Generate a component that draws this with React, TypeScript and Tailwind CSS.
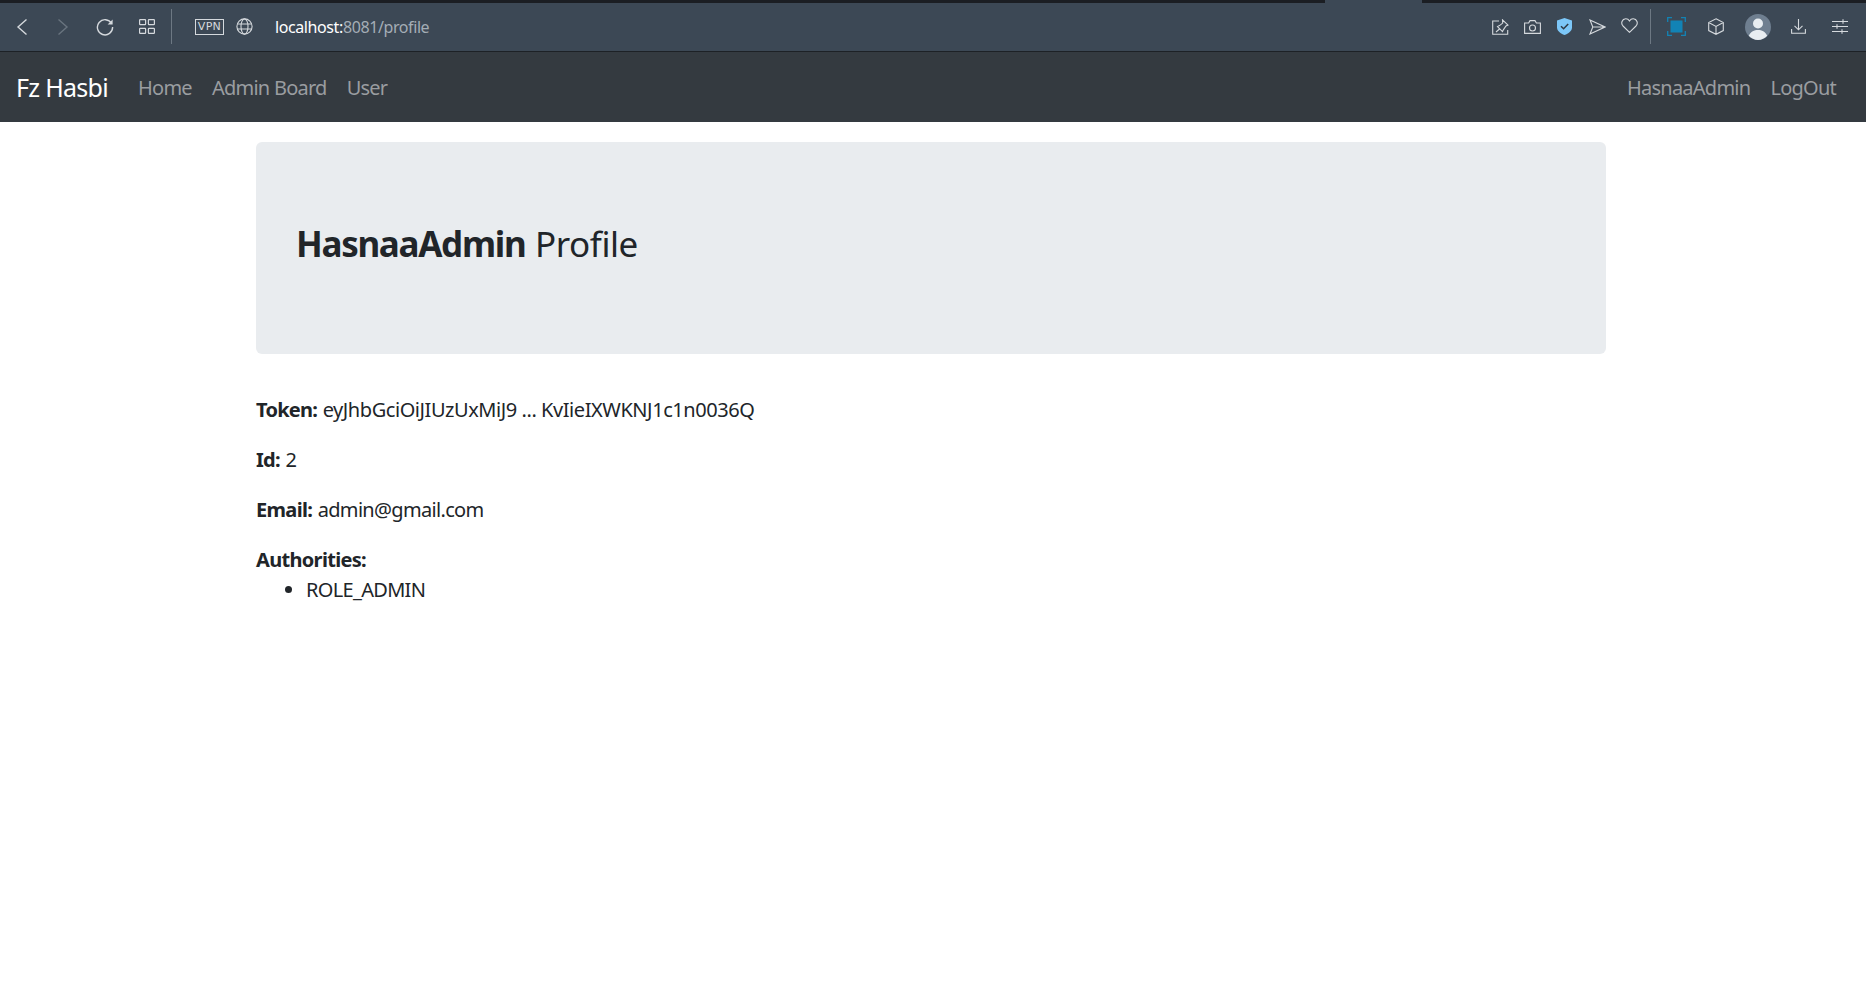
import React from "react";

const S = "fill-none stroke-[#d5d9dd]";

function Toolbar() {
  return (
    <div className="h-[52px] bg-[#3c4855] border-b border-[#1d2126] flex flex-col shrink-0">
      <div className="h-[3px] flex shrink-0">
        <div className="w-[1325px] bg-[#1b1e23]" />
        <div className="w-[97px]" />
        <div className="flex-1 bg-[#1b1e23]" />
      </div>
      <div className="flex-1 flex items-center justify-between pb-[1px]">
        <div className="flex items-center">
          <svg className="ml-[16px] mt-[1px]" width="12" height="18" viewBox="0 0 12 18"><path d="M10.5 1.5 2 9l8.5 7.5" className={S} strokeWidth="1.4" /></svg>
          <svg className="ml-[29px] mt-[1px]" width="12" height="18" viewBox="0 0 12 18"><path d="M1.5 1.5 10 9l-8.5 7.5" className="fill-none stroke-[#69747f]" strokeWidth="1.4" /></svg>
          <svg className="ml-[27px]" width="18" height="18" viewBox="0 0 18 18"><path d="M15.6 5.5A7.6 7.6 0 1 0 16.6 9" className={S} strokeWidth="1.4" /><path d="M16.6 1.6v5h-5z" className="fill-[#d5d9dd]" /></svg>
          <svg className="ml-[25px]" width="16" height="15" viewBox="0 0 16 15"><g className={S} strokeWidth="1.2"><rect x="0.6" y="0.6" width="6" height="5" rx="0.6" /><rect x="9.4" y="0.6" width="6" height="5" rx="0.6" /><rect x="0.6" y="9.4" width="6" height="5" rx="0.6" /><rect x="9.4" y="9.4" width="6" height="5" rx="0.6" /></g></svg>
          <div className="ml-[16px] w-[1px] h-[35px] bg-[#6d7883]" />
          <div className="ml-[23px] w-[29px] h-[16px] border border-[#d5d9dd] flex items-center justify-center text-[11px] leading-none tracking-[0.3px] text-[#d5d9dd] font-['DejaVu_Sans',sans-serif]">VPN</div>
          <svg className="ml-[12px]" width="17" height="17" viewBox="0 0 17 17"><g className={S} strokeWidth="1.1"><circle cx="8.5" cy="8.5" r="7.6" /><ellipse cx="8.5" cy="8.5" rx="3.5" ry="7.6" /><path d="M1.4 6h14.2M1.4 11h14.2" /></g></svg>
          <div className="ml-[22px] text-[16px] leading-none tracking-[-0.4px] pt-[1px] text-[#a4adb6] font-['Noto_Sans',sans-serif]">
            <span className="text-white">localhost:</span>8081/profile
          </div>
        </div>
        <div className="flex items-center">
          <svg width="17" height="16" viewBox="0 0 17 16"><g className={S} strokeWidth="1.1"><path d="M7 2H.7v13.3h15V11" /><path d="M10.5.8 16 6l-2 1-2.5 3.6-1 2-5-5 2-1 3.2-2.5zM7.5 10 4 13" /></g></svg>
          <svg className="ml-[15px]" width="17" height="14" viewBox="0 0 17 14"><g className={S} strokeWidth="1.1"><path d="M.6 3h4l1.4-2.4h5L12.4 3h4v10.4H.6z" /><circle cx="8.5" cy="8" r="3" /></g></svg>
          <svg className="ml-[16px]" width="15" height="17" viewBox="0 0 15 17"><path d="M7.5 0 15 2.5v7c0 3.6-3.6 6-7.5 7.500C3.600 15.500 0 13.100 0 9.500v-7z" className="fill-[#7cc7f8]" /><path d="M4 8.200 6.600 10.800 11.200 6" className="fill-none stroke-[#2f3a45]" strokeWidth="1.5" /></svg>
          <svg className="ml-[17px]" width="17" height="16" viewBox="0 0 17 16"><path d="M1 1 16 8 1 15l2.800-7zM3.800 8H16" className={S} strokeWidth="1.1" /></svg>
          <svg className="ml-[15px] mb-[2px]" width="17" height="15" viewBox="0 0 17 15"><path d="M8.500 14.300 2 8C-.5 5.300 1 1 4.700 .8 6.500.7 7.700 1.700 8.500 3 9.300 1.700 10.500.7 12.300.8 16 1 17.500 5.300 15 8z" className={S} strokeWidth="1.1" /></svg>
          <div className="ml-[12px] w-[1px] h-[35px] bg-[#6d7883]" />
          <svg className="ml-[16px]" width="19" height="19" viewBox="0 0 19 19"><path d="M.7 5V.7H5M14 .7h4.300V5M.7 14v4.300H5M14 18.300h4.300V14" className="fill-none stroke-[#1283b5]" strokeWidth="1.300" /><rect x="3.500" y="3.500" width="12" height="12" className="fill-[#1283b5]" /></svg>
          <svg className="ml-[22px]" width="16" height="17" viewBox="0 0 16 17"><path d="M8 .8 15.300 4.600v8L8 16.300.7 12.600v-8zM.7 4.600 8 8.500l7.300-3.900M8 8.500v7.800" className={S} strokeWidth="1.100" /></svg>
          <svg className="ml-[21px]" width="26" height="26" viewBox="0 0 26 26"><circle cx="13" cy="13" r="13" className="fill-[#6f7f90]" /><circle cx="13" cy="9.500" r="5" className="fill-[#e8edf1]" /><path d="M3.800 21.800C6 17.500 9 16 13 16s7 1.500 9.200 5.800A13 13 0 0 1 13 26a13 13 0 0 1-9.200-4.200z" className="fill-[#e8edf1]" /></svg>
          <svg className="ml-[20px]" width="15" height="15" viewBox="0 0 15 15"><path d="M7.500 0v10.500M3.500 6.800 7.500 10.800 11.500 6.800M.6 10v4.300h13.800V10" className={S} strokeWidth="1.100" /></svg>
          <svg className="ml-[26px] mr-[18px]" width="16" height="15" viewBox="0 0 16 15"><path d="M0 2.500h16M0 7.500h16M0 12.500h16M11 .3v4.400M5 5.300v4.400M10 10.300v4.400" className={S} strokeWidth="1.100" /></svg>
        </div>
      </div>
    </div>
  );
}

function Navbar() {
  return (
    <nav className="h-[70px] bg-[#343a40] flex items-center justify-between font-['Noto_Sans',sans-serif] text-[20px] tracking-[-0.75px] text-[#9a9da0] pt-[1px] shrink-0">
      <div className="flex items-center">
        <a className="ml-[16px] text-[25px] leading-none text-white tracking-[-0.7px]">Fz Hasbi</a>
        <a className="ml-[30px]">Home</a>
        <a className="ml-[20px]">Admin Board</a>
        <a className="ml-[20px]">User</a>
      </div>
      <div className="flex items-center gap-[20px] mr-[30px]">
        <a>HasnaaAdmin</a>
        <a>LogOut</a>
      </div>
    </nav>
  );
}

export default function App() {
  return (
    <div className="w-[1866px] h-[990px] bg-white flex flex-col overflow-hidden font-['Noto_Sans',sans-serif] text-[#212529]">
      <Toolbar />
      <Navbar />
      <main className="ml-[256px] w-[1350px] mt-[20px]">
        <div className="h-[212px] bg-[#e9ecef] rounded-[6px] px-[40px] pt-[81px] mb-[41px]">
          <h3 className="text-[35px] leading-[42px] tracking-[-0.45px]">
            <strong className="font-bold tracking-[-1.3px]">HasnaaAdmin</strong> <span className="ml-[1px]">Profile</span>
          </h3>
        </div>
        <div className="text-[20px] leading-[30px] tracking-[-0.68px]">
          <p className="mb-[20px]"><strong className="tracking-[-0.75px]">Token:</strong> <span className="ml-[1px] tracking-[-0.44px]">eyJhbGciOiJIUzUxMiJ9 ... KvIieIXWKNJ1c1n0036Q</span></p>
          <p className="mb-[20px]"><strong>Id:</strong> <span className="ml-[1px]">2</span></p>
          <p className="mb-[20px]"><strong>Email:</strong> <span className="ml-[1px]">admin@gmail.com</span></p>
          <strong>Authorities:</strong>
          <ul className="list-disc pl-[50px]">
            <li>ROLE_ADMIN</li>
          </ul>
        </div>
      </main>
    </div>
  );
}
